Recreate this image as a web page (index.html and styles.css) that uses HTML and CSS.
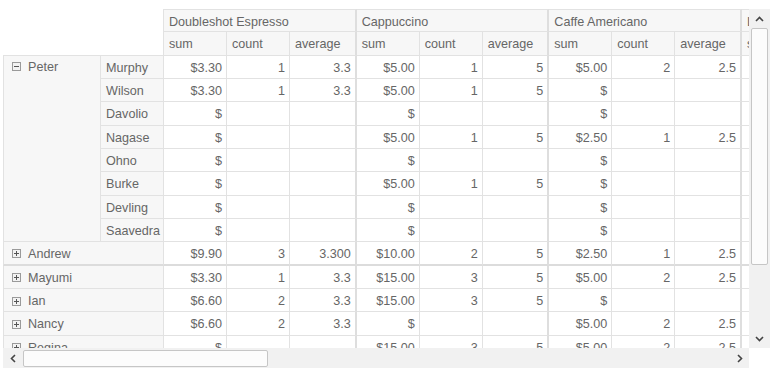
FILE: index.html
```html
<!DOCTYPE html>
<html>
<head>
<meta charset="utf-8">
<link rel="stylesheet" href="styles.css">
</head>
<body>
<div class="pivot">
  <div class="viewport">
    <div class="grid">
      <div class="cell corner"></div>
      <div class="cell ch grp gl top">Doubleshot Espresso</div>
      <div class="cell ch grp gl top">Cappuccino</div>
      <div class="cell ch grp gl top">Caffe Americano</div>
      <div class="cell ch grp gl top">Latte</div>

      <div class="cell ch">sum</div><div class="cell ch">count</div><div class="cell ch gl">average</div>
      <div class="cell ch">sum</div><div class="cell ch">count</div><div class="cell ch gl">average</div>
      <div class="cell ch">sum</div><div class="cell ch">count</div><div class="cell ch gl">average</div>
      <div class="cell ch">sum</div><div class="cell ch">count</div><div class="cell ch gl">average</div>

      <div class="cell rh first group"><svg class="glyph" width="9" height="9" viewBox="0 0 9 9"><rect x="0.5" y="0.5" width="8" height="8" fill="#f2f2f2" stroke="#9a9a9a"/><path d="M2 4.5h5" stroke="#555"/></svg>Peter</div>
      <div class="cell rh">Murphy</div>
      <div class="cell n">$3.30</div><div class="cell n">1</div><div class="cell n gl">3.3</div>
      <div class="cell n">$5.00</div><div class="cell n">1</div><div class="cell n gl">5</div>
      <div class="cell n">$5.00</div><div class="cell n">2</div><div class="cell n gl">2.5</div>
      <div class="cell n"></div><div class="cell n"></div><div class="cell n gl"></div>

      <div class="cell rh">Wilson</div>
      <div class="cell n">$3.30</div><div class="cell n">1</div><div class="cell n gl">3.3</div>
      <div class="cell n">$5.00</div><div class="cell n">1</div><div class="cell n gl">5</div>
      <div class="cell n">$</div><div class="cell n"></div><div class="cell n gl"></div>
      <div class="cell n"></div><div class="cell n"></div><div class="cell n gl"></div>

      <div class="cell rh">Davolio</div>
      <div class="cell n">$</div><div class="cell n"></div><div class="cell n gl"></div>
      <div class="cell n">$</div><div class="cell n"></div><div class="cell n gl"></div>
      <div class="cell n">$</div><div class="cell n"></div><div class="cell n gl"></div>
      <div class="cell n"></div><div class="cell n"></div><div class="cell n gl"></div>

      <div class="cell rh">Nagase</div>
      <div class="cell n">$</div><div class="cell n"></div><div class="cell n gl"></div>
      <div class="cell n">$5.00</div><div class="cell n">1</div><div class="cell n gl">5</div>
      <div class="cell n">$2.50</div><div class="cell n">1</div><div class="cell n gl">2.5</div>
      <div class="cell n"></div><div class="cell n"></div><div class="cell n gl"></div>

      <div class="cell rh">Ohno</div>
      <div class="cell n">$</div><div class="cell n"></div><div class="cell n gl"></div>
      <div class="cell n">$</div><div class="cell n"></div><div class="cell n gl"></div>
      <div class="cell n">$</div><div class="cell n"></div><div class="cell n gl"></div>
      <div class="cell n"></div><div class="cell n"></div><div class="cell n gl"></div>

      <div class="cell rh">Burke</div>
      <div class="cell n">$</div><div class="cell n"></div><div class="cell n gl"></div>
      <div class="cell n">$5.00</div><div class="cell n">1</div><div class="cell n gl">5</div>
      <div class="cell n">$</div><div class="cell n"></div><div class="cell n gl"></div>
      <div class="cell n"></div><div class="cell n"></div><div class="cell n gl"></div>

      <div class="cell rh">Devling</div>
      <div class="cell n">$</div><div class="cell n"></div><div class="cell n gl"></div>
      <div class="cell n">$</div><div class="cell n"></div><div class="cell n gl"></div>
      <div class="cell n">$</div><div class="cell n"></div><div class="cell n gl"></div>
      <div class="cell n"></div><div class="cell n"></div><div class="cell n gl"></div>

      <div class="cell rh">Saavedra</div>
      <div class="cell n">$</div><div class="cell n"></div><div class="cell n gl"></div>
      <div class="cell n">$</div><div class="cell n"></div><div class="cell n gl"></div>
      <div class="cell n">$</div><div class="cell n"></div><div class="cell n gl"></div>
      <div class="cell n"></div><div class="cell n"></div><div class="cell n gl"></div>

      <div class="cell rh first wide tb"><svg class="glyph" width="9" height="9" viewBox="0 0 9 9"><rect x="0.5" y="0.5" width="8" height="8" fill="#f2f2f2" stroke="#9a9a9a"/><path d="M2 4.5h5M4.5 2v5" stroke="#555"/></svg>Andrew</div>
      <div class="cell n tb">$9.90</div><div class="cell n tb">3</div><div class="cell n gl tb">3.300</div>
      <div class="cell n tb">$10.00</div><div class="cell n tb">2</div><div class="cell n gl tb">5</div>
      <div class="cell n tb">$2.50</div><div class="cell n tb">1</div><div class="cell n gl tb">2.5</div>
      <div class="cell n tb"></div><div class="cell n tb"></div><div class="cell n gl tb"></div>

      <div class="cell rh first wide"><svg class="glyph" width="9" height="9" viewBox="0 0 9 9"><rect x="0.5" y="0.5" width="8" height="8" fill="#f2f2f2" stroke="#9a9a9a"/><path d="M2 4.5h5M4.5 2v5" stroke="#555"/></svg>Mayumi</div>
      <div class="cell n">$3.30</div><div class="cell n">1</div><div class="cell n gl">3.3</div>
      <div class="cell n">$15.00</div><div class="cell n">3</div><div class="cell n gl">5</div>
      <div class="cell n">$5.00</div><div class="cell n">2</div><div class="cell n gl">2.5</div>
      <div class="cell n"></div><div class="cell n"></div><div class="cell n gl"></div>

      <div class="cell rh first wide"><svg class="glyph" width="9" height="9" viewBox="0 0 9 9"><rect x="0.5" y="0.5" width="8" height="8" fill="#f2f2f2" stroke="#9a9a9a"/><path d="M2 4.5h5M4.5 2v5" stroke="#555"/></svg>Ian</div>
      <div class="cell n">$6.60</div><div class="cell n">2</div><div class="cell n gl">3.3</div>
      <div class="cell n">$15.00</div><div class="cell n">3</div><div class="cell n gl">5</div>
      <div class="cell n">$</div><div class="cell n"></div><div class="cell n gl"></div>
      <div class="cell n"></div><div class="cell n"></div><div class="cell n gl"></div>

      <div class="cell rh first wide"><svg class="glyph" width="9" height="9" viewBox="0 0 9 9"><rect x="0.5" y="0.5" width="8" height="8" fill="#f2f2f2" stroke="#9a9a9a"/><path d="M2 4.5h5M4.5 2v5" stroke="#555"/></svg>Nancy</div>
      <div class="cell n">$6.60</div><div class="cell n">2</div><div class="cell n gl">3.3</div>
      <div class="cell n">$</div><div class="cell n"></div><div class="cell n gl"></div>
      <div class="cell n">$5.00</div><div class="cell n">2</div><div class="cell n gl">2.5</div>
      <div class="cell n"></div><div class="cell n"></div><div class="cell n gl"></div>

      <div class="cell rh first wide"><svg class="glyph" width="9" height="9" viewBox="0 0 9 9"><rect x="0.5" y="0.5" width="8" height="8" fill="#f2f2f2" stroke="#9a9a9a"/><path d="M2 4.5h5M4.5 2v5" stroke="#555"/></svg>Regina</div>
      <div class="cell n">$</div><div class="cell n"></div><div class="cell n gl"></div>
      <div class="cell n">$15.00</div><div class="cell n">3</div><div class="cell n gl">5</div>
      <div class="cell n">$5.00</div><div class="cell n">2</div><div class="cell n gl">2.5</div>
      <div class="cell n"></div><div class="cell n"></div><div class="cell n gl"></div>
    </div>
  </div>

  <div class="vscroll">
    <div class="sbtn"><svg width="9" height="6" viewBox="0 0 9 6"><polyline points="1,5 4.5,1.5 8,5" fill="none" stroke="#444" stroke-width="1.6"/></svg></div>
    <div class="vthumb"></div>
    <div class="fill"></div>
    <div class="sbtn"><svg width="9" height="6" viewBox="0 0 9 6"><polyline points="1,1 4.5,4.5 8,1" fill="none" stroke="#444" stroke-width="1.6"/></svg></div>
  </div>

  <div class="hscroll">
    <div class="sbtn"><svg width="6" height="9" viewBox="0 0 6 9"><polyline points="5,1 1.5,4.5 5,8" fill="none" stroke="#444" stroke-width="1.6"/></svg></div>
    <div class="hthumb"></div>
    <div class="fill"></div>
    <div class="sbtn"><svg width="6" height="9" viewBox="0 0 6 9"><polyline points="1,1 4.5,4.5 1,8" fill="none" stroke="#444" stroke-width="1.6"/></svg></div>
  </div>
  <div class="sbcorner"></div>
</div>
</body>
</html>
```

FILE: styles.css
```css
* { box-sizing: border-box; }
html, body { margin: 0; background: #fff; }
body {
  font-family: "Liberation Sans", Arial, sans-serif;
  font-size: 12.6px;
  color: #666;
}
.pivot {
  display: grid;
  grid-template-columns: 746px 21px;
  grid-template-rows: 339px 20px;
  margin: 9px 0 0 3px;
}
.viewport { overflow: hidden; }
.grid {
  display: grid;
  grid-template-columns: 98px 63px repeat(4, 63px 63px 66.667px);
  grid-auto-rows: 23.333px;
  width: max-content;
}
.cell {
  display: flex;
  align-items: center;
  padding: 2px 4px 0 5px;
  border-right: 1px solid #e2e2e2;
  border-bottom: 1px solid #e2e2e2;
  background: #fff;
  white-space: nowrap;
  overflow: hidden;
}
.corner {
  grid-column: span 2;
  grid-row: span 2;
}
.ch { background: #f7f7f7; }
.top { border-top: 1px solid #e2e2e2; }
.grp { grid-column: span 3; }
.gl { border-right: 2px solid #dedede; }
.rh { background: #f7f7f7; }
.first { border-left: 1px solid #e2e2e2; }
.group { grid-row: span 8; align-items: flex-start; padding-top: 4px; }
.wide { grid-column: span 2; }
.tb { border-bottom: 2px solid #dcdcdc; }
.n { justify-content: flex-end; }
.glyph { flex: none; margin: 0 7px 0 3px; }
.group .glyph { margin-top: 2px; }

.vscroll {
  background: #f1f1f1;
  display: flex;
  flex-direction: column;
  align-items: center;
}
.hscroll {
  background: #f1f1f1;
  display: flex;
  align-items: center;
}
.sbtn {
  flex: none;
  width: 19px;
  height: 19px;
  display: flex;
  align-items: center;
  justify-content: center;
}
.vscroll .sbtn { width: 21px; }
.hscroll .sbtn { height: 20px; }
.fill { flex: 1; }
.vthumb {
  flex: none;
  width: 17px;
  height: 237px;
  background: #fcfcfc;
  border: 1px solid #c6c6c6;
  border-radius: 2px;
}
.hthumb {
  flex: none;
  width: 245px;
  height: 17px;
  margin-left: 1px;
  background: #fcfcfc;
  border: 1px solid #c6c6c6;
  border-radius: 2px;
}
.sbcorner { background: #fff; }
```
